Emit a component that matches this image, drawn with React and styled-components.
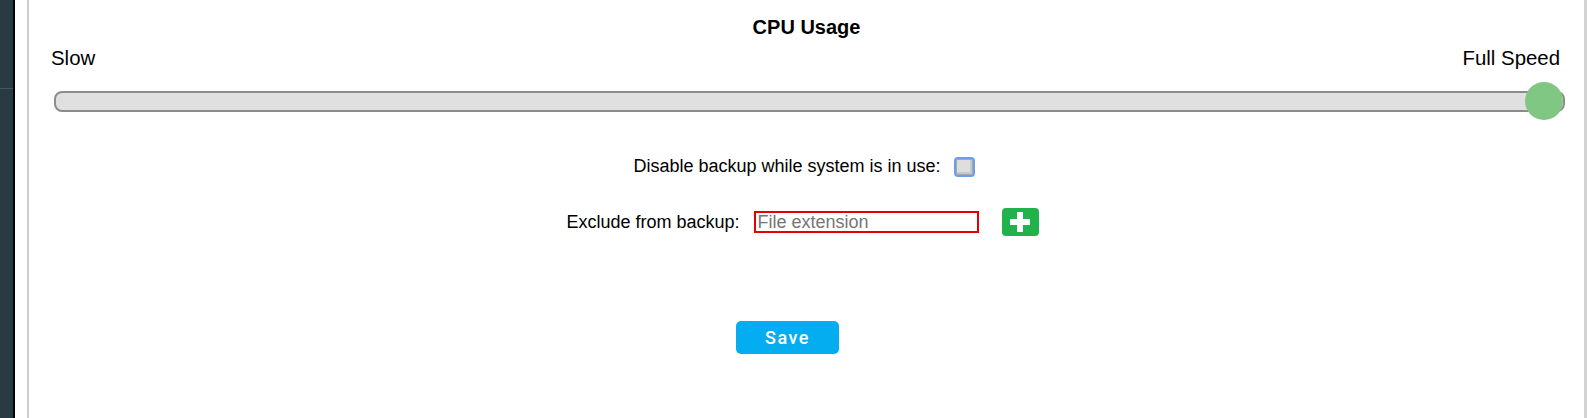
import React, { useState } from 'react';
import styled, { createGlobalStyle } from 'styled-components';

const Global = createGlobalStyle`
    html, body {
        margin:0;
        padding:0;
        background:#fff;
        font-family:"Liberation Sans", Arial, sans-serif;
        color:#000;
    }
`;

const Page = styled.div`
    display:flex;
    flex-direction:row;
    height:418px;
    width:1587px;
    overflow:hidden;
`;

const Sidebar = styled.div`
    width:13px;
    height:100%;
    background:#2a3a42;
    border-right:2px solid #000;
    display:flex;
    flex-direction:column;

    .sidebar--rule{
        margin-top:88px;
        height:1px;
        background:#44565f;
    }
`;

const Gutter = styled.div`
    width:12px;
    background:#fff;
`;

const Panel = styled.div`
    flex:1;
    display:flex;
    flex-direction:column;
    border-left:2px solid #cfcfcf;
    border-right:3px solid #d3d3d3;
    padding-top:16px;
`;

const Title = styled.div`
    text-align:center;
    font-size:20px;
    line-height:23px;
    font-weight:bold;
`;

const Labels = styled.div`
    display:flex;
    justify-content:space-between;
    margin-top:8px;
    padding:0 24px 0 22px;
    font-size:20.4px;
    line-height:23px;
`;

const Slider = styled.div`
    position:relative;
    display:flex;
    align-items:center;
    height:39px;
    margin-top:12px;

    .slider--track{
        flex:1;
        height:21px;
        box-sizing:border-box;
        margin:0 19px 0 25px;
        background:#e0e0e0;
        border:2px solid #8c8c8c;
        border-radius:8px;
    }

    .slider--thumb{
        position:absolute;
        top:0;
        right:21px;
        width:38px;
        height:38px;
        border-radius:50%;
        background:#81c784;
    }
`;

const Row = styled.div`
    display:flex;
    flex-direction:row;
    justify-content:center;
    align-items:center;
    margin-top:${props => props.top}px;
    margin-right:${props => props.shift || 0}px;
    font-size:18px;
    line-height:21px;
`;

const Check = styled.input`
    appearance:none;
    -webkit-appearance:none;
    margin:0 0 0 13px;
    width:21px;
    height:20px;
    box-sizing:border-box;
    border:2px solid #6d9eeb;
    border-radius:4px;
    background:#dedede;
    box-shadow:inset 0 0 0 1px #a8a8a8, inset -2px -2px 0 1px #c8c8c8;
    cursor:pointer;
`;

const TextBox = styled.input`
    margin-left:14px;
    width:225px;
    height:22px;
    box-sizing:border-box;
    border:2px solid #e60000;
    padding:0 2px;
    font-family:"Liberation Sans", Arial, sans-serif;
    font-size:18px;
    outline:none;

    &::placeholder{
        color:#757575;
    }
`;

const AddBtn = styled.button`
    margin-left:23px;
    width:37px;
    height:28px;
    border:none;
    border-radius:4px;
    background:#22b24c;
    display:flex;
    justify-content:center;
    align-items:center;
    padding:0;
    cursor:pointer;
`;

const Save = styled.button`
    align-self:center;
    margin-top:85px;
    margin-right:38px;
    width:103px;
    height:33px;
    border:none;
    border-radius:5px;
    background:#03adef;
    color:#fff;
    font-family:Roboto, "Liberation Sans", Arial, sans-serif;
    font-size:18px;
    font-weight:500;
    letter-spacing:1.5px;
    cursor:pointer;
`;

const App = () => {
    const [off, setOff] = useState(false);
    const [ext, setExt] = useState('');

    return(
        <Page>
            <Global />
            <Sidebar>
                <div className="sidebar--rule"></div>
            </Sidebar>
            <Gutter />
            <Panel>
                <Title>CPU Usage</Title>
                <Labels>
                    <span>Slow</span>
                    <span>Full Speed</span>
                </Labels>
                <Slider>
                    <div className="slider--track"></div>
                    <div className="slider--thumb"></div>
                </Slider>
                <Row top={35} shift={5}>
                    <span>Disable backup while system is in use:</span>
                    <Check type="checkbox" checked={off} onChange={e => setOff(e.target.checked)} />
                </Row>
                <Row top={31} shift={8}>
                    <span>Exclude from backup:</span>
                    <TextBox placeholder="File extension" value={ext} onChange={e => setExt(e.target.value)} />
                    <AddBtn>
                        <svg width="20" height="20" viewBox="0 0 20 20">
                            <rect x="7" y="0" width="6" height="20" fill="#fff" />
                            <rect x="0" y="7" width="20" height="6" fill="#fff" />
                        </svg>
                    </AddBtn>
                </Row>
                <Save>Save</Save>
            </Panel>
        </Page>
    )
}

export default App;
